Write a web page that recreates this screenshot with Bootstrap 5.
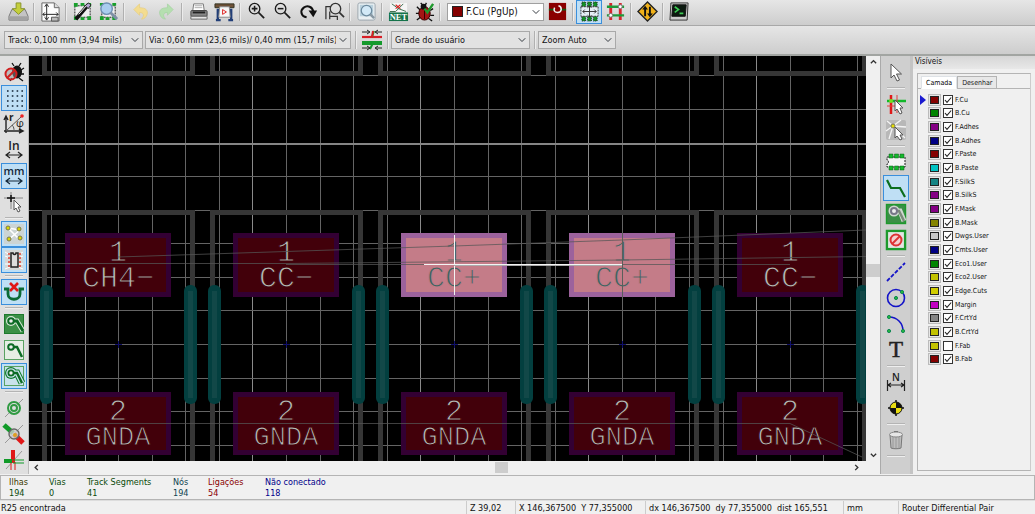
<!DOCTYPE html>
<html lang="pt-BR">
<head>
<meta charset="utf-8">
<meta name="viewport" content="width=device-width, initial-scale=1">
<title>Pcbnew</title>
<link rel="stylesheet" href="https://cdn.jsdelivr.net/npm/bootstrap@5.3.0/dist/css/bootstrap.min.css">
<script src="https://cdn.jsdelivr.net/npm/bootstrap@5.3.0/dist/js/bootstrap.bundle.min.js"></script>
<style>
  body { font-family: "DejaVu Sans Condensed", "DejaVu Sans", sans-serif; font-size: 9px; line-height: 12px; color: #111; background: #f0f0f0; }
  .topbar { background: linear-gradient(#e6e6e6, #cdcdcd); }
  .bar-main { height: 26px; padding: 0 5px 2px; border-bottom: 1px solid #a8a8a8; }
  .bar-opts { height: 30px; padding: 0 4px; border-bottom: 2px solid #a2a5a2; }
  .tool { width: 26px; height: 26px; padding: 0; border: 1px solid transparent; border-radius: 0; background: none; display: flex; align-items: center; justify-content: center; flex: none; }
  .tool svg { width: 22px; height: 22px; display: block; flex: none; overflow: visible; font-family: "Open Sans", sans-serif; }
  .tool.on { background: #bfdff5; border: 1px solid #3a8fdc; }
  .bar-main .tool { height: 24px; }
  .bar-main .tool svg { width: 21px; height: 21px; }
  .rule-v { width: 2px; height: 18px; margin: 0 2px; border-left: 1px solid #b0b0b0; border-right: 1px solid #ececec; flex: none; }
  .rule-h { height: 2px; width: 18px; margin: 2px 0; border-top: 1px solid #b4b4b4; border-bottom: 1px solid #eee; flex: none; }
  .pick { height: 18px; min-height: 0; padding: 0 14px 0 3px; border: 1px solid #a9a9a9; border-radius: 0; font-size: 9px; line-height: 14px; color: #111; background-color: #e2e2e2; background-position: right 3px center; background-size: 8px 8px; flex: none; }
  .pick-track { width: 139px; margin-right: 2px; }
  .pick-via { width: 206px; margin-right: 2px; }
  .pick-grid { width: 139px; margin-right: 2px; }
  .pick-zoom { width: 78px; }
  .pick-layer { height: 18px; width: 97px; border: 1px solid #a0a0a0; background: #fff; flex: none; }
  .pick-layer .pick { border: 0; background-color: #fff; height: 16px; width: 0; flex: 1 1 0; font-size: 10px; }
  .chip { width: 11px; height: 11px; background: #840000; border: 1px solid #222; flex: none; }
  .side { width: 29px; flex: none; padding: 3px 0 0; overflow: hidden; }
  .side-l { background: #dfdfdf; border-right: 1px solid #bbb; }
  .side-r { background: #cfcfcf; border-left: 1px solid #aaa; width: 30px; }
  .board { background: #000; }
  .pad-txt { font-family: "Liberation Mono", monospace; text-anchor: middle; fill: #b4bab4; stroke: #42000a; stroke-width: 1; }
  .pad-sel .pad-txt { fill: #3e6562; stroke: #c47c88; }
  .sb { background: #f0f0f0; flex: none; }
  .sb-v { width: 14px; }
  .sb-h { height: 13px; padding: 0 3px; }
  .sb button { border: 0; padding: 0; background: none; width: 9px; height: 11px; display: flex; align-items: center; justify-content: center; }
  .sb svg { width: 7px; height: 7px; }
  .thumb-v { height: 13px; background: #cdcdcd; }
  .thumb-h { width: 13px; height: 11px; margin-left: 56%; background: #cdcdcd; }
  .panel { width: 125px; flex: none; border-left: 3px solid #c4c4c4; background: #f0f0f0; font-size: 7px; }
  .panel-title { font-size: 8px; height: 13px; padding-left: 2px; background: linear-gradient(#d6d6d6, #e8e8e8); }
  .book { margin: 4px 4px 3px 4px; border: 1px solid #b4b4b4; border-right-color: #ccc; }
  .book .nav-tabs { border-color: #b4b4b4; padding: 2px 3px 0; height: 15px; }
  .book .nav-link { font-size: 7px; line-height: 10px; padding: 1px 4px; height: 13px; color: #222; border-radius: 0; border: 1px solid #b4b4b4; background: #e8e8e8; margin-bottom: 0; }
  .book .nav-link.active { background: #fff; border-bottom-color: #fff; }
  .layers { height: 273px; display: grid; grid-auto-rows: 1fr; margin-top: 4px; }
  .layer { display: grid; grid-template-columns: 6px 13px 10px 1fr; column-gap: 2px; align-items: center; padding-left: 2px; }
  .layer .arrow { display: block; width: 6px; height: 10px; margin: 0; }
  .swatch { width: 13px; height: 12px; padding: 0; border: 1px solid #bbb; background: #e6e6e6; display: flex; align-items: center; justify-content: center; }
  .swatch span { width: 9px; height: 8px; border: 1px solid #222; display: block; }
  .layer .form-check-input { width: 10px; height: 10px; margin: 0; border: 1px solid #333; border-radius: 0; background-color: #fff; }
  .layer .form-check-input:checked { background-color: #fff; background-size: 8px 8px; background-image: url("data:image/svg+xml,%3Csvg xmlns='http://www.w3.org/2000/svg' viewBox='0 0 8 8'%3E%3Cpath d='M1 4l2 2.3L7.2 1.5' fill='none' stroke='%23222' stroke-width='1.1'/%3E%3C/svg%3E"); }
  .layer label { line-height: 12px; }
  .facts { height: 25px; margin-top: 1px; border: 1px solid #b4b4b4; padding: 1px 8px; line-height: 11px; display: grid; grid-template-columns: 40px 38px 86px 35px 57px auto; justify-content: start; white-space: nowrap; }
  .status { height: 14px; display: grid; grid-template-columns: 466fr 49fr 130fr 198fr 55fr 137fr; border-top: 1px solid #ddd; white-space: pre; }
  .status > div { padding-left: 3px; border-left: 1px solid #ccc; line-height: 14px; overflow: hidden; }
  .status > div:first-child { padding-left: 1px; border: 0; }
  .c-g { color: #0a4a0a; } .c-n { color: #0f4450; } .c-r { color: #8a0000; } .c-b { color: #00008a; } .c-d { color: #3a3a00; }
</style>
</head>
<body class="vh-100 d-flex flex-column overflow-hidden">

<header>
  <div class="topbar bar-main d-flex align-items-center" role="toolbar" aria-label="Principal">
    <button class="tool" aria-label="Salvar"><svg viewBox="0 0 22 22"><path d="M4 9h14l3 7v4H1v-4z" fill="#c4c4c4" stroke="#777"/><path d="M1.500 16h19v4h-19z" fill="#a2a2a2"/><path d="M8.500 2h5v6h4L11 14 4.500 8h4z" fill="#c4cf3c" stroke="#87932a"/></svg></button>
    <i class="rule-v"></i>
    <button class="tool" aria-label="Página"><svg viewBox="0 0 22 22"><path d="M2 2h13l5 5v14H2z" fill="#fdfdfd" stroke="#666"/><path d="M15 2v5h5" fill="#ddd" stroke="#666"/><path d="M7 4v15M3 14h16M5 6l2-3 2 3M5 17l2 3 2-3M5 12l-2 2 2 2M17 12l2 2-2 2" fill="none" stroke="#222"/><path d="M12 17h7v4h-7z" fill="#bbb" stroke="#555"/></svg></button>
    <i class="rule-v"></i>
    <button class="tool" aria-label="Editor de módulos"><svg viewBox="0 0 22 22"><rect x="3" y="5" width="16" height="12" fill="#eee" stroke="#222" stroke-dasharray="2 1"/><path d="M2 2h4v4H2zM9 2h4v3H9zM16 2h4v4h-4zM2 16h4v4H2zM9 17h4v3H9zM16 16h4v4h-4z" fill="#18a02c"/><path d="M4 19L17 4" stroke="#111" stroke-width="4"/><path d="M14 5l3-3 3 2-3 4z" fill="#b9a4d4" stroke="#222"/><path d="M7 14l8-9" stroke="#fff"/></svg></button>
    <button class="tool" aria-label="Visualizador de módulos"><svg viewBox="0 0 22 22"><rect x="4" y="5" width="14" height="12" fill="#eee" stroke="#222" stroke-dasharray="2 1"/><path d="M2 2h4v3H2zM15 2h4v3h-4zM2 16h4v4H2zM8 17h4v3H8zM15 16h4v4h-4z" fill="#18a02c"/><circle cx="9" cy="8" r="6" fill="#a9cdee" stroke="#6d8fb3" stroke-width="1.500"/><path d="M13 12l7 7" stroke="#7e8fa5" stroke-width="3"/></svg></button>
    <i class="rule-v"></i>
    <button class="tool" aria-label="Desfazer"><svg viewBox="0 0 22 22"><path d="M4 9l6-6v4c7 0 9 3 8 7-1 3-3 5-6 5 3-3 3-7-2-7v3z" fill="#f3dc90" stroke="#e7cb74" stroke-width=".6"/></svg></button>
    <button class="tool" aria-label="Refazer"><svg viewBox="0 0 22 22"><path d="M18 9l-6-6v4c-7 0-9 3-8 7 1 3 3 5 6 5-3-3-3-7 2-7v3z" fill="#b5dfb0" stroke="#9fd09a" stroke-width=".6"/></svg></button>
    <i class="rule-v"></i>
    <button class="tool" aria-label="Imprimir"><svg viewBox="0 0 22 22"><path d="M6 3h10l1 7H5z" fill="#fff" stroke="#777"/><path d="M7 5h8M7 7h8" stroke="#aaa"/><rect x="3" y="10" width="17" height="6" rx="1" fill="#888" stroke="#444"/><path d="M3 16h17v3H3z" fill="#e4e4e4" stroke="#666"/><path d="M5 12h13" stroke="#222" stroke-width="2"/></svg></button>
    <button class="tool" aria-label="Plotar"><svg viewBox="0 0 22 22"><path d="M1 3h20v4H1z" fill="#6e5137" stroke="#332"/><path d="M4 8v12M18 8v12M2 20h5M15 20h5" stroke="#223f78" stroke-width="2.500"/><path d="M6 6h10l1 11H5z" fill="#f7f7f7" stroke="#888"/><path d="M9 9v5l4-2.500z" fill="none" stroke="#d22"/></svg></button>
    <i class="rule-v"></i>
    <button class="tool" aria-label="Mais zoom"><svg viewBox="0 0 22 22" fill="none" stroke="#1c1c1c"><circle cx="9" cy="8" r="5.500" stroke-width="1.400"/><path d="M6 8h6M9 5v6" stroke-width="1.600"/><path d="M13 12l6 6" stroke-width="1.800"/></svg></button>
    <button class="tool" aria-label="Menos zoom"><svg viewBox="0 0 22 22" fill="none" stroke="#1c1c1c"><circle cx="9" cy="8" r="5.500" stroke-width="1.400"/><path d="M6 8h6" stroke-width="1.600"/><path d="M13 12l6 6" stroke-width="1.800"/></svg></button>
    <button class="tool" aria-label="Redesenhar"><svg viewBox="0 0 22 22"><path d="M9 17C3 16 2 10 6 7c4-3 9-1 10 4" fill="none" stroke="#111" stroke-width="2.200"/><path d="M11 10h9l-4 7z" fill="#111"/></svg></button>
    <button class="tool" aria-label="Ajustar zoom"><svg viewBox="0 0 22 22" fill="none" stroke="#333"><path d="M2 19V6h5M6 19v-8M6 16h8v4" stroke-width="1.300"/><circle cx="12" cy="8" r="5.500" stroke-width="1.400"/><path d="M16 12l5 5" stroke-width="1.800"/></svg></button>
    <i class="rule-v"></i>
    <button class="tool" aria-label="Localizar"><svg viewBox="0 0 22 22"><rect x="2" y="2" width="18" height="18" rx="2" fill="#e9eff2" stroke="#9aa6ad"/><rect x="4" y="4" width="14" height="12" fill="#b9d0dc"/><circle cx="11" cy="10" r="5.500" fill="#d2e9f7" stroke="#6c8a9e" stroke-width="1.300"/><path d="M15 14l4 4" stroke="#8998a3" stroke-width="2.500"/></svg></button>
    <i class="rule-v"></i>
    <button class="tool" aria-label="Ler netlist"><svg viewBox="0 0 22 22"><path d="M2 2h18v10H2z" fill="#f5f5f5"/><path d="M2 11h6l8-8M4 3l7 5 8 3" fill="none" stroke="#3a6b4c"/><path d="M8 4l5 4M13 4l-5 4" stroke="#d22" stroke-width="1.200"/><path d="M1 12h20v9H1z" fill="#15734a"/><text x="11" y="20" text-anchor="middle" font-family="Liberation Serif" font-weight="700" font-size="9" fill="#fff">NET</text></svg></button>
    <button class="tool" aria-label="Verificar regras"><svg viewBox="0 0 22 22"><path d="M3 6l4 4M2 13h5M3 20l5-4M17 10l3-2M17 15h4M15 18l4 3M7 2l3 3M13 2l-2 4" stroke="#111" stroke-width="1.400"/><ellipse cx="11" cy="13" rx="6" ry="7" fill="#a51515" stroke="#300"/><circle cx="10" cy="6" r="3" fill="#111"/><path d="M11 8v11" stroke="#300"/><path d="M11 8l3 4 6-9" fill="none" stroke="#1f9a2d" stroke-width="2.500"/></svg></button>
    <i class="rule-v"></i>
    <div class="pick-layer d-flex align-items-center ps-1 ms-1"><span class="chip"></span><label for="lay" class="visually-hidden">Camada ativa</label><select id="lay" class="form-select pick"><option>F.Cu (PgUp)</option></select></div>
    <button class="tool" aria-label="Par de camadas"><svg viewBox="0 0 22 22"><path d="M2 2h18v18H2z" fill="#8a0000"/><path d="M2 9h6M14 9h6" stroke="#135c13" stroke-width="2"/><path d="M12 5c4 1 4 7-1 7-4 0-4-3-3-5" fill="none" stroke="#f0f0f0" stroke-width="1.600"/></svg></button>
    <i class="rule-v"></i>
    <button class="tool on" aria-label="Modo módulo"><svg viewBox="0 0 22 22"><path d="M3 1h4v5H3zM9 1h4v5H9zM15 1h4v5h-4zM3 16h4v5H3zM9 16h4v5H9zM15 16h4v5h-4z" fill="#129326" stroke="#222" stroke-dasharray="1 1"/><path d="M2 6h18v10H2z" fill="#e4eef5" stroke="#333" stroke-dasharray="2 1"/><path d="M11 5v12M4 11h14M9 7l2-2 2 2M9 15l2 2 2-2M6 9l-2 2 2 2M16 9l2 2-2 2" fill="none" stroke="#333"/></svg></button>
    <button class="tool" aria-label="Modo trilha"><svg viewBox="0 0 22 22"><path d="M6 2v18M16 2v18" stroke="#d8242c" stroke-width="3"/><path d="M2 6h18M2 15h18" stroke="#1f9a3a" stroke-width="2.500"/><circle cx="6" cy="15" r="2" fill="#fff" stroke="#777"/><circle cx="16" cy="6" r="2" fill="#fff" stroke="#777"/></svg></button>
    <i class="rule-v"></i>
    <button class="tool" aria-label="Autorroteador"><svg viewBox="0 0 22 22"><path d="M11 1l10 10-10 10L1 11z" fill="#f2b21a" stroke="#222" stroke-width="1.400"/><path d="M8.500 16V8M13.500 6v8" stroke="#111" stroke-width="2"/><path d="M5.500 9h6l-3-4zM10.500 13h6l-3 4z" fill="#111"/></svg></button>
    <i class="rule-v"></i>
    <button class="tool" aria-label="Console"><svg viewBox="0 0 22 22"><path d="M2 2h18l-1 18H1z" fill="#ccc" stroke="#333"/><path d="M4 4h14l-1 12H3z" fill="#0c1a10" stroke="#111"/><path d="M6 6l4 3-4 3M11 13h4" fill="none" stroke="#3ecb55" stroke-width="1.700"/></svg></button>
  </div>

  <div class="topbar bar-opts d-flex align-items-center" role="toolbar" aria-label="Opções">
    <select class="form-select pick pick-track" aria-label="Trilha"><option>Track: 0,100 mm (3,94 mils)</option></select>
    <select class="form-select pick pick-via" aria-label="Via"><option>Via: 0,60 mm (23,6 mils)/ 0,40 mm (15,7 mils) *</option></select>
    <i class="rule-v"></i>
    <button class="tool" aria-label="Largura automática"><svg viewBox="0 0 22 22"><path d="M1 8h20" stroke="#d81e26" stroke-width="2.200"/><path d="M1 14h20" stroke="#159a2c" stroke-width="4"/><path d="M11 8l2-6M9 20l3-6" stroke="#159a2c" stroke-width="2"/><path d="M11 8l1-6" stroke="#d81e26" stroke-width="2"/><path d="M1 3h7M21 3h-6M1 19h7M21 19h-6M6 1l3 2-3 2M17 1l-3 2 3 2M6 17l3 2-3 2M17 17l-3 2 3 2" fill="none" stroke="#222"/></svg></button>
    <i class="rule-v"></i>
    <select class="form-select pick pick-grid" aria-label="Grade"><option>Grade do usuário</option></select>
    <i class="rule-v"></i>
    <select class="form-select pick pick-zoom" aria-label="Zoom"><option>Zoom Auto</option></select>
  </div>
</header>

<main class="d-flex flex-grow-1 overflow-hidden">
  <div class="side side-l d-flex flex-column align-items-center" role="toolbar" aria-label="Exibição">
    <button class="tool" aria-label="DRC"><svg viewBox="0 0 22 22"><path d="M11 5L9 2M16 5l2-3M18 9l3-2M18 13h3M16 17l4 3M9 17l-2 3" stroke="#111" stroke-width="1.300"/><ellipse cx="14" cy="11" rx="5" ry="6.500" fill="#111"/><circle cx="8" cy="13" r="5.500" fill="#999" fill-opacity=".5" stroke="#cf1f1f" stroke-width="2"/><path d="M4 17l8-8" stroke="#cf1f1f" stroke-width="2"/></svg></button>
    <button class="tool on" aria-label="Grade"><svg viewBox="0 0 22 22"><path d="M4 4h16M4 9h16M4 14h16M4 19h16" stroke="#123" stroke-width="1.600" stroke-dasharray="1.600 3.200"/></svg></button>
    <button class="tool" aria-label="Coordenadas polares"><svg viewBox="0 0 22 22" fill="none" stroke="#222"><path d="M3 20V4M1 7l2-4 2 4M1 18h18M16 16l4 2-4 2" stroke-width="1.400"/><path d="M3 18L18 4M9 12c2 2 2 4 2 6" stroke="#555"/><circle cx="19" cy="3" r="1.800" fill="#e22" stroke="none"/><text x="6" y="8" font-size="10" font-weight="700" fill="#222" stroke="none">r</text><text x="13" y="14" font-size="11" fill="#222" stroke="none">φ</text></svg></button>
    <button class="tool" aria-label="Polegadas"><svg viewBox="0 0 22 22"><text x="11" y="11" text-anchor="middle" font-size="12" font-weight="600" fill="#222">In</text><path d="M4 16h14M7 13l-4 3 4 3M15 13l4 3-4 3" fill="none" stroke="#222" stroke-width="1.200"/></svg></button>
    <button class="tool on" aria-label="Milímetros"><svg viewBox="0 0 22 22"><text x="11" y="10" text-anchor="middle" font-size="11" font-weight="600" fill="#14283a">mm</text><path d="M4 16h14M7 13l-4 3 4 3M15 13l4 3-4 3" fill="none" stroke="#14283a" stroke-width="1.200"/></svg></button>
    <button class="tool" aria-label="Cursor"><svg viewBox="0 0 22 22"><path d="M8 1v17M1 7h19" stroke="#888"/><path d="M8 4v7M4 7h8" stroke="#111" stroke-width="1.500"/><path d="M11 9v10l2-2 2 4 2-1-2-4h3z" fill="#fff" stroke="#555"/></svg></button>
    <i class="rule-h"></i>
    <button class="tool on" aria-label="Ratsnest"><svg viewBox="0 0 22 22"><path d="M1 1h20v20H1z" fill="#ccd4d4"/><path d="M5 5l12 12M17 7L5 17M5 5l12 2" stroke="#fff" stroke-width="1.600"/><g fill="#dcd800" stroke="#775"><circle cx="5" cy="5" r="2"/><circle cx="16" cy="6" r="2"/><circle cx="6" cy="16" r="2"/><circle cx="17" cy="15" r="2"/></g></svg></button>
    <button class="tool on" aria-label="Ratsnest do módulo"><svg viewBox="0 0 22 22"><path d="M2 1h18v20H2z" fill="#d4d8d8"/><path d="M2 3l5 3M2 7l5 2M20 3l-5 3M20 7l-5 2M2 15h5M20 15h-5M2 20l5-2M20 20l-5-2" stroke="#fff"/><path d="M8 4h2c0 2 3 2 3 0h2v14H8z" fill="#ddd" stroke="#222" stroke-width="1.500"/><path d="M6 4v15M17 4v15" stroke="#e04030" stroke-width="1.500" stroke-dasharray="2 2"/></svg></button>
    <i class="rule-h"></i>
    <button class="tool on" aria-label="Apagar trilha"><svg viewBox="0 0 22 22"><path d="M1 8h4v5c0 7 12 7 12 0V8h4" fill="none" stroke="#0b6a34" stroke-width="2.800"/><path d="M7 2l8 8M15 2l-8 8" stroke="#e01818" stroke-width="2.600"/></svg></button>
    <i class="rule-h"></i>
    <button class="tool" aria-label="Zonas preenchidas"><svg viewBox="0 0 22 22"><rect x="1.500" y="1.500" width="19" height="19" fill="#3b8f46" stroke="#1d7a2c"/><path d="M8 8h6l6 10" fill="none" stroke="#d8e8d8" stroke-width="5"/><circle cx="8" cy="8" r="5" fill="#d8e8d8"/><path d="M8 8h6l6 10" fill="none" stroke="#0d6b25" stroke-width="3"/><circle cx="8" cy="8" r="2.800" fill="#eee" stroke="#0d6b25" stroke-width="2"/></svg></button>
    <button class="tool" aria-label="Zonas vazias"><svg viewBox="0 0 22 22"><rect x="1.500" y="1.500" width="19" height="19" fill="#e6eee4" stroke="#5aa262"/><path d="M8 8h6l5 10" fill="none" stroke="#0d6b25" stroke-width="2.500"/><circle cx="8" cy="8" r="2.800" fill="#eee" stroke="#0d6b25" stroke-width="2"/></svg></button>
    <button class="tool on" aria-label="Contorno das zonas"><svg viewBox="0 0 22 22"><rect x="1.500" y="1.500" width="19" height="19" fill="#c9e2ec" stroke="#5aa262"/><path d="M8 8h6l5 10" fill="none" stroke="#0d7a2c" stroke-width="7"/><circle cx="8" cy="8" r="6" fill="#0d7a2c"/><path d="M8 8h6l5 10" fill="none" stroke="#c9e2ec" stroke-width="5"/><circle cx="8" cy="8" r="4.800" fill="#c9e2ec"/><path d="M8 8h6l5 10" fill="none" stroke="#0d6b25" stroke-width="2.400"/><circle cx="8" cy="8" r="2.600" fill="#eee" stroke="#0d6b25" stroke-width="1.800"/></svg></button>
    <i class="rule-h"></i>
    <button class="tool" aria-label="Vias"><svg viewBox="0 0 22 22"><path d="M2 20L20 2" stroke="#999"/><circle cx="11" cy="11" r="6" fill="none" stroke="#2f9a42" stroke-width="2"/><circle cx="11" cy="11" r="3" fill="#ddd" stroke="#2f9a42" stroke-width="2"/></svg></button>
    <button class="tool" aria-label="Trilhas"><svg viewBox="0 0 22 22"><path d="M2 20L20 2" stroke="#999"/><path d="M1 2l9 8" stroke="#109a28" stroke-width="5"/><path d="M11 11l9 9" stroke="#e01818" stroke-width="5"/><circle cx="11" cy="11" r="5" fill="#ccc" fill-opacity=".8" stroke="#666" stroke-width="1.400"/><circle cx="12" cy="12" r="2" fill="#dda020"/></svg></button>
    <button class="tool" aria-label="Alto contraste"><svg viewBox="0 0 22 22"><path d="M3 20L19 2" stroke="#999"/><path d="M10 1v13" stroke="#e01818" stroke-width="4"/><path d="M8 13v8M12 13v8" stroke="#e01818"/><path d="M1 12h8" stroke="#109a28" stroke-width="4"/><path d="M10 11h11M10 14h11" stroke="#109a28" stroke-width="1.200"/></svg></button>
  </div>

  <div class="d-flex flex-column flex-grow-1 overflow-hidden">
    <div class="d-flex flex-grow-1 overflow-hidden">
      <div class="board flex-grow-1 overflow-hidden"><svg id="pcb" class="d-block w-100 h-100" role="img" aria-label="Placa"></svg></div>
      <div class="sb sb-v d-flex flex-column align-items-center">
        <button aria-label="Acima"><svg viewBox="0 0 8 8"><path d="M1 6l3-3 3 3" fill="none" stroke="#333" stroke-width="1.600"/></svg></button>
        <div class="flex-grow-1 w-100 d-flex flex-column justify-content-center"><div class="thumb-v mt-4"></div></div>
        <button aria-label="Abaixo"><svg viewBox="0 0 8 8"><path d="M1 2l3 3 3-3" fill="none" stroke="#333" stroke-width="1.600"/></svg></button>
      </div>
    </div>
    <div class="sb sb-h d-flex align-items-center">
      <button aria-label="Esquerda"><svg viewBox="0 0 8 8"><path d="M5.500 1l-3 3 3 3" fill="none" stroke="#333" stroke-width="1.600"/></svg></button>
      <div class="flex-grow-1"><div class="thumb-h"></div></div>
      <button class="me-3" aria-label="Direita"><svg viewBox="0 0 8 8"><path d="M2.500 1l3 3-3 3" fill="none" stroke="#333" stroke-width="1.600"/></svg></button>
    </div>
  </div>

  <div class="side side-r d-flex flex-column align-items-center" role="toolbar" aria-label="Ferramentas">
    <button class="tool" aria-label="Selecionar"><svg viewBox="0 0 22 22"><path d="M6 3v14l3-3 3 6 2.500-1-3-6h5z" fill="#fff" stroke="#555"/></svg></button>
    <i class="rule-h"></i>
    <button class="tool" aria-label="Destacar rede"><svg viewBox="0 0 22 22"><path d="M6 2v19" stroke="#e01818" stroke-width="2.500"/><path d="M2 8h19" stroke="#12b82a" stroke-width="2.500"/><path d="M2 13h9M12 2v18" stroke="#e04040"/><circle cx="6" cy="8" r="2" fill="#7d2"/><path d="M10 7v11l2-2 3 5 2-1-2-5h3z" fill="#fff" stroke="#555"/></svg></button>
    <button class="tool" aria-label="Ratsnest local"><svg viewBox="0 0 22 22"><rect x="1" y="1" width="20" height="20" rx="2" fill="#b8b8b8"/><path d="M8 7L2 2M8 7L16 1M8 7L1 12M8 7L4 20M8 7l13 1M8 7l12 12" stroke="#f4f4f4" stroke-width="1.300"/><circle cx="8" cy="7" r="2" fill="#e8e000" stroke="#775"/><path d="M10 8v11l2-2 3 4 2-1-2-4h3z" fill="#fff" stroke="#555"/></svg></button>
    <i class="rule-h"></i>
    <button class="tool" aria-label="Adicionar módulo"><svg viewBox="0 0 22 22"><path d="M2 6h18v10H2v-3c2 0 2-4 0-4z" fill="#f4f4f4" stroke="#222" stroke-dasharray="2 1"/><path d="M4 3h4v4H4zM9.500 3h4v4h-4zM15 3h4v4h-4zM4 15h4v4H4zM9.500 15h4v4h-4zM15 15h4v4h-4z" fill="#14b82c" stroke="#0a5c14" stroke-width=".5"/></svg></button>
    <button class="tool on" aria-label="Adicionar trilhas"><svg viewBox="0 0 22 22"><path d="M2 3l4 8h9l5 9" fill="none" stroke="#0b6e1d" stroke-width="2.200"/></svg></button>
    <button class="tool" aria-label="Adicionar zonas"><svg viewBox="0 0 22 22"><rect x="1.500" y="1.500" width="19" height="19" fill="#3b8f46" stroke="#1d9a2c" stroke-width="1.400"/><path d="M9 8h6l4 10" fill="none" stroke="#cfd8cf" stroke-width="5"/><circle cx="9" cy="8" r="5.500" fill="#cfd8cf"/><path d="M9 8h5l5 10" fill="none" stroke="#7b8a7b" stroke-width="2.500"/><circle cx="9" cy="8" r="3" fill="#eee" stroke="#778" stroke-width="2"/></svg></button>
    <button class="tool" aria-label="Área proibida"><svg viewBox="0 0 22 22"><rect x="2" y="2" width="18" height="18" fill="#e4e4e4" stroke="#1d9a2c" stroke-width="2.500"/><rect x="3.500" y="3.500" width="15" height="15" fill="none" stroke="#eee" stroke-dasharray="1 1"/><circle cx="11" cy="11" r="5.500" fill="#f5d0d0" stroke="#dd3434" stroke-width="2"/><path d="M7 15l8-8" stroke="#dd3434" stroke-width="2"/></svg></button>
    <i class="rule-h"></i>
    <button class="tool" aria-label="Linha"><svg viewBox="0 0 22 22"><path d="M2 20L20 2" stroke="#1414c8" stroke-width="1.800" stroke-dasharray="4 1.600"/></svg></button>
    <button class="tool" aria-label="Círculo"><svg viewBox="0 0 22 22"><circle cx="11" cy="11" r="8.500" fill="none" stroke="#1414c8" stroke-width="1.600"/><g fill="#27b840" stroke="#185"><circle cx="11" cy="11" r="1.600"/><circle cx="17" cy="5" r="1.600"/></g></svg></button>
    <button class="tool" aria-label="Arco"><svg viewBox="0 0 22 22"><path d="M4 4c8 0 14 6 14 14" fill="none" stroke="#1414c8" stroke-width="1.600"/><g fill="#27b840" stroke="#185"><circle cx="4" cy="4" r="1.600"/><circle cx="4" cy="18" r="1.600"/><circle cx="18" cy="18" r="1.600"/></g></svg></button>
    <button class="tool" aria-label="Texto"><svg viewBox="0 0 22 22"><text x="11" y="18" text-anchor="middle" font-family="Liberation Serif, serif" font-size="23" fill="#222" stroke="#222" stroke-width=".5">T</text></svg></button>
    <i class="rule-h"></i>
    <button class="tool" aria-label="Cota"><svg viewBox="0 0 22 22"><path d="M2.500 9v11M19.500 9v11M3 14h16M6 12l-3 2 3 2M16 12l3 2-3 2" fill="none" stroke="#222" stroke-width="1.200"/><text x="11" y="10" text-anchor="middle" font-size="10" font-weight="600" fill="#222">N</text></svg></button>
    <button class="tool" aria-label="Alvo"><svg viewBox="0 0 22 22"><path d="M11 3v16M3 11h16" stroke="#111" stroke-width="1.500"/><circle cx="11" cy="11" r="6" fill="#e8dc10" stroke="#111"/><path d="M11 11V5a6 6 0 0 1 6 6zM11 11v6a6 6 0 0 1-6-6z" fill="#111"/></svg></button>
    <i class="rule-h"></i>
    <button class="tool" aria-label="Excluir"><svg viewBox="0 0 22 22"><path d="M5 6h12l-1 13c-2 1-8 1-10 0z" fill="#bdbdbd" stroke="#777"/><path d="M8 8v11M11 8v11M14 8v11" stroke="#999"/><ellipse cx="11" cy="5.500" rx="6.500" ry="2.500" fill="#e6e6e6" stroke="#888"/><path d="M9 2.500h4" stroke="#777"/></svg></button>
    <i class="rule-h"></i>
  </div>

  <aside class="panel d-flex flex-column">
    <div class="panel-title">Visíveis</div>
    <div class="book flex-grow-1">
      <ul class="nav nav-tabs flex-nowrap" role="tablist">
        <li class="nav-item"><button class="nav-link active" role="tab">Camada</button></li>
        <li class="nav-item"><button class="nav-link" role="tab">Desenhar</button></li>
      </ul>
      <div id="layers" class="layers"></div>
    </div>
  </aside>
</main>

<footer>
  <div class="facts">
    <div class="c-d">Ilhas<br><span class="c-g">194</span></div>
    <div class="c-g">Vias<br>0</div>
    <div class="c-g">Track Segments<br>41</div>
    <div class="c-n">Nós<br>194</div>
    <div class="c-r">Ligações<br>54</div>
    <div class="c-b">Não conectado<br>118</div>
  </div>
  <div class="status"><div>R25 encontrada</div><div>Z 39,02</div><div>X 146,367500  Y 77,355000</div><div>dx 146,367500  dy 77,355000  dist 165,551</div><div>mm</div><div>Router Differential Pair</div></div>
</footer>

<script>
  // Layer list: name, colour
  const layers = [['F.Cu','#840000'],['B.Cu','#008400'],['F.Adhes','#840084'],['B.Adhes','#000084'],['F.Paste','#840000'],['B.Paste','#00c2c2'],['F.SilkS','#148484'],['B.SilkS','#840084'],['F.Mask','#840084'],['B.Mask','#848400'],['Dwgs.User','#c8c8c8'],['Cmts.User','#000084'],['Eco1.User','#008400'],['Eco2.User','#c2c200'],['Edge.Cuts','#d0cc00'],['Margin','#c200c2'],['F.CrtYd','#848484'],['B.CrtYd','#c2c200'],['F.Fab','#c2c200'],['B.Fab','#840000']];
  document.getElementById('layers').innerHTML = layers.map(([n, c], i) =>
    `<div class="layer">${i ? '<span></span>' : '<svg class="arrow" viewBox="0 0 6 10"><path d="M0 0l6 5-6 5z" fill="#1a1ad0"/></svg>'}
      <button class="swatch" aria-label="Cor ${n}"><span style="background:${c}"></span></button>
      <input class="form-check-input" type="checkbox" id="l${i}" ${n === 'F.Fab' ? '' : 'checked'}><label for="l${i}">${n}</label></div>`).join('');

  // Board drawing, in board-view units
  const at = (a, b, n) => Array.from({length: n}, (_, i) => Math.round(a + b * i));
  let s = '<g transform="translate(-29 -56)" shape-rendering="crispEdges">';
  for (const [i, x] of at(51, 33.58, 25).entries()) s += `<path d="M${x + .5} 56V461" stroke="${i % 5 == 1 ? '#8a8a8a' : '#646464'}"/>`;
  for (const [i, y] of at(75.4, 33.57, 12).entries()) s += `<path d="M29 ${y + .5}H866" stroke="${i == 2 ? '#858585' : '#646464'}" stroke-width="${i == 2 ? 2 : 1}"/>`;
  for (let k = 0; k < 5; k++) {
    const x = 42 + 168 * k;
    s += `<path d="M${x + 2.5} 50V73.500H${x + 150.5}V50M${x + 2.5} 461V212.500H${x + 150.5}V461" fill="none" stroke="#363636" stroke-width="5"/>`;
  }
  s += '<g shape-rendering="auto">';
  for (let k = 0; k < 5; k++) for (const x of [40 + 168 * k, 184 + 168 * k])
    s += `<rect x="${x}" y="285" width="13" height="119" rx="6" fill="#033f3f"/><path d="M${x + 6.500} 291V398" stroke="#124848" stroke-width="5"/>`;
  s += '</g>';
  ['CH4-', 'CC-', 'CC+', 'CC+', 'CC-'].forEach((t, k) => {
    const x = 65 + 168 * k, sel = t === 'CC+', m = x + 53;
    s += `<g class="${sel ? 'pad-sel' : ''}"><rect x="${x}" y="233" width="106" height="64" fill="${sel ? '#9c629c' : '#330033'}"/><rect x="${x + 5}" y="238" width="96" height="54" fill="${sel ? '#c47c88' : '#42000a'}"/>
      <g shape-rendering="auto"><text class="pad-txt" x="${m}" y="261" font-size="30">1</text><text class="pad-txt" x="${m}" y="287" font-size="30">${t.replace('-', '−')}</text></g></g>
      <rect x="${x}" y="392" width="106" height="63" fill="#330033"/><rect x="${x + 5}" y="397" width="96" height="53" fill="#42000a"/>
      <g shape-rendering="auto"><text class="pad-txt" x="${m}" y="420" font-size="30">2</text><text class="pad-txt" x="${m}" y="445" font-size="27">GNDA</text></g>
      <path d="M${m - 3} 344.500h7M${m + .5} 341v7" stroke="#10106a"/>`;
  });
  s += `<g fill="none" stroke="#555" stroke-opacity=".75" shape-rendering="auto">
    <path d="M29 263.500H286L622 260L866 256.500M118 257L454 246L622 240L866 230M286 264.500H790M29 423.500H790L862 457"/></g>
    <path d="M622.500 233V297" stroke="#5a5f5a"/><path d="M424 264.500H622M454.500 235V295" stroke="#f4f4f4"/><path d="M454 265.500H622" stroke="#aaa"/></g>`;
  document.getElementById('pcb').innerHTML = s;
</script>
</body>
</html>
